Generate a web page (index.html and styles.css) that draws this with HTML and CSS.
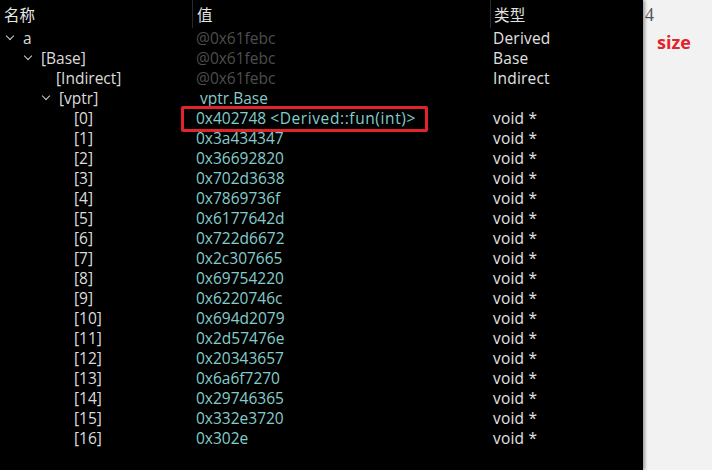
FILE: index.html
```html
<!DOCTYPE html>
<html>
<head>
<meta charset="utf-8">
<link rel="stylesheet" href="styles.css">
</head>
<body>
<div class="page">
  <div class="panel">
    <div class="header">
      <div class="c-name">名称</div>
      <div class="c-val sep">值</div>
      <div class="c-type sep">类型</div>
    </div>
    <div class="rows">
      <div class="row"><div class="c-name l0"><span class="chev"></span>a</div><div class="c-val dim">@0x61febc</div><div class="c-type">Derived</div></div>
      <div class="row"><div class="c-name l1"><span class="chev"></span>[Base]</div><div class="c-val dim">@0x61febc</div><div class="c-type">Base</div></div>
      <div class="row"><div class="c-name l2">[Indirect]</div><div class="c-val dim">@0x61febc</div><div class="c-type">Indirect</div></div>
      <div class="row"><div class="c-name l1b"><span class="chev"></span>[vptr]</div><div class="c-val cy">&nbsp;vptr.Base</div><div class="c-type"></div></div>
      <div class="row"><div class="c-name l3">[0]</div><div class="c-val cy">0x402748 <span class="sym">&lt;Derived::fun(int)&gt;</span></div><div class="c-type">void *</div></div>
      <div class="row"><div class="c-name l3">[1]</div><div class="c-val cy">0x3a434347</div><div class="c-type">void *</div></div>
      <div class="row"><div class="c-name l3">[2]</div><div class="c-val cy">0x36692820</div><div class="c-type">void *</div></div>
      <div class="row"><div class="c-name l3">[3]</div><div class="c-val cy">0x702d3638</div><div class="c-type">void *</div></div>
      <div class="row"><div class="c-name l3">[4]</div><div class="c-val cy">0x7869736f</div><div class="c-type">void *</div></div>
      <div class="row"><div class="c-name l3">[5]</div><div class="c-val cy">0x6177642d</div><div class="c-type">void *</div></div>
      <div class="row"><div class="c-name l3">[6]</div><div class="c-val cy">0x722d6672</div><div class="c-type">void *</div></div>
      <div class="row"><div class="c-name l3">[7]</div><div class="c-val cy">0x2c307665</div><div class="c-type">void *</div></div>
      <div class="row"><div class="c-name l3">[8]</div><div class="c-val cy">0x69754220</div><div class="c-type">void *</div></div>
      <div class="row"><div class="c-name l3">[9]</div><div class="c-val cy">0x6220746c</div><div class="c-type">void *</div></div>
      <div class="row"><div class="c-name l3">[10]</div><div class="c-val cy">0x694d2079</div><div class="c-type">void *</div></div>
      <div class="row"><div class="c-name l3">[11]</div><div class="c-val cy">0x2d57476e</div><div class="c-type">void *</div></div>
      <div class="row"><div class="c-name l3">[12]</div><div class="c-val cy">0x20343657</div><div class="c-type">void *</div></div>
      <div class="row"><div class="c-name l3">[13]</div><div class="c-val cy">0x6a6f7270</div><div class="c-type">void *</div></div>
      <div class="row"><div class="c-name l3">[14]</div><div class="c-val cy">0x29746365</div><div class="c-type">void *</div></div>
      <div class="row"><div class="c-name l3">[15]</div><div class="c-val cy">0x332e3720</div><div class="c-type">void *</div></div>
      <div class="row"><div class="c-name l3">[16]</div><div class="c-val cy">0x302e</div><div class="c-type">void *</div></div>
    </div>
    <div class="mark"></div>
  </div>
  <div class="side">
    <div class="four">4</div>
    <div class="size">size</div>
  </div>
</div>
</body>
</html>
```
FILE: styles.css
```css
html, body { margin: 0; padding: 0; }
body { width: 712px; height: 470px; overflow: hidden; background: #f2f2f2; }
.page { display: flex; height: 470px; }
.panel {
  position: relative;
  width: 643px;
  flex: none;
  background: #000;
  font-family: "Open Sans", "Noto Sans CJK SC", sans-serif;
  font-size: 15.5px;
  color: #dcdcdc;
  box-shadow: 2px 0 3px rgba(0,0,0,0.35);
}
.header { display: flex; height: 28px; align-items: center; color: #e6e6e6; }
.header .c-name { padding-left: 4px; }
.sep { border-left: 1px solid #2a2a2a; align-self: stretch; display: flex; align-items: center; }
.row { display: flex; height: 20px; align-items: center; white-space: nowrap; }
.c-name { width: 192px; flex: none; box-sizing: border-box; display: flex; align-items: center; }
.c-val { width: 298px; flex: none; box-sizing: border-box; padding-left: 4px; }
.c-type { flex: 1; box-sizing: border-box; padding-left: 3px; color: #e2e2e2; letter-spacing: 0.2px; }
.sym { letter-spacing: 0.6px; }
.header .c-val { padding-left: 4px; }
.l0 { padding-left: 4px; }
.l1 { padding-left: 22px; }
.l1b { padding-left: 40px; }
.l2 { padding-left: 56px; }
.l3 { padding-left: 74px; }
.chev {
  width: 5px; height: 5px;
  border-right: 1.5px solid #cfcfcf;
  border-bottom: 1.5px solid #cfcfcf;
  transform: rotate(45deg);
  margin: -4px 10px 0 3px;
  flex: none;
}
.dim { color: #4d4d4d; }
.cy { color: #84cccc; }
.mark {
  position: absolute;
  left: 181px; top: 106px;
  width: 241px; height: 20px;
  border: 3px solid #e3232c;
  border-radius: 2px;
}
.side { flex: 1; display: flex; flex-direction: column; }
.four {
  font-family: "Liberation Serif", serif;
  font-size: 18px;
  color: #555;
  padding-left: 2px;
  line-height: 1;
  margin-top: 6px;
}
.size {
  font-family: "Open Sans", sans-serif;
  font-weight: bold;
  font-size: 18px;
  color: #e3232c;
  padding-left: 14px;
  margin-top: 6px;
}
```
